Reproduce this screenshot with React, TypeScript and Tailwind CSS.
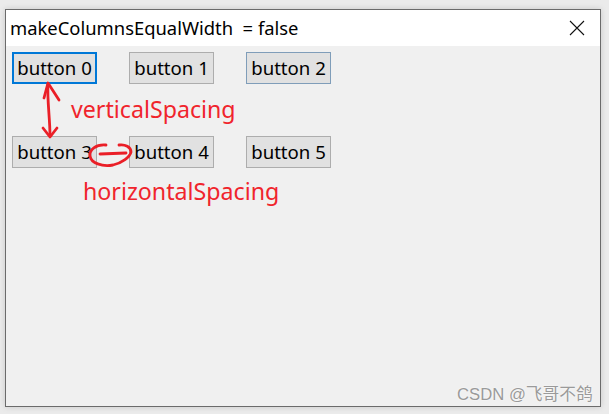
export default function App() {
  const buttons = ["button 0", "button 1", "button 2", "button 3", "button 4", "button 5"];

  return (
    <div className="relative h-[414px] w-[609px] overflow-hidden bg-[#ebebeb] pl-[5px] pr-[8px] pt-[9px] pb-[7px] font-['Noto_Sans',sans-serif]">
      <div className="flex h-full flex-col border border-[#6b6b6b] bg-[#f0f0f0] shadow-[0_0_6px_rgba(0,0,0,0.15)]">
        {/* title bar */}
        <div className="flex h-[36px] shrink-0 items-center justify-between bg-white pl-[4px] pr-[15px]">
          <span className="whitespace-pre text-[18.4px] leading-none text-black">makeColumnsEqualWidth  = false</span>
          <svg width="16" height="16" viewBox="0 0 16 16" aria-hidden>
            <path d="M1 1 L15 15 M15 1 L1 15" stroke="#111" strokeWidth="1.1" fill="none" />
          </svg>
        </div>

        {/* client area */}
        <div className="relative flex-1 pl-[6px] pt-[6px]">
          <div className="grid w-fit grid-cols-[85px_85px_85px] gap-x-[32px] gap-y-[52px]">
            {buttons.map((label, i) => (
              <div
                key={label}
                className={
                  i === 0
                    ? "flex h-[32px] items-center justify-center border-2 border-[#0078d7] bg-[#e1e1e1] text-[18.6px] text-black"
                    : i === 2
                    ? "flex h-[32px] items-center justify-center border border-[#7f9db9] bg-[#e1e1e1] text-[18.6px] text-black"
                    : "flex h-[32px] items-center justify-center border border-[#adadad] bg-[#e1e1e1] text-[18.6px] text-black"
                }
              >
                {label}
              </div>
            ))}
          </div>
        </div>
      </div>

      {/* annotations */}
      <span className="absolute left-[71px] top-[98px] text-[23.2px] leading-none text-[#f0242c]">verticalSpacing</span>
      <span className="absolute left-[83px] top-[180px] text-[23.2px] leading-none text-[#f0242c]">horizontalSpacing</span>
      <svg className="pointer-events-none absolute inset-0" width="609" height="414" viewBox="0 0 609 414" aria-hidden>
        <g stroke="#ea1f27" strokeWidth="2.8" fill="none" strokeLinecap="round" strokeLinejoin="round">
          <path d="M48 84 C47 100 50 118 50 136" />
          <path d="M44 98 L48 83 L59 100" />
          <path d="M43 128 L50 137 L57 128" />
          <path d="M106 145 C96 144 89 150 90 156 C91 163 102 167 113 165 C122 163 130 157 131 152 C131 147 125 144 119 145" />
          <path d="M100 154 L126 153" />
        </g>
      </svg>

      {/* watermark */}
      <span className="absolute left-[457px] top-[387px] font-['Liberation_Sans','Noto_Sans_CJK_SC',sans-serif] text-[16.7px] leading-none text-[#9a9a9a] [text-shadow:0_0_2px_#fff]">
        CSDN @飞哥不鸽
      </span>
    </div>
  );
}
